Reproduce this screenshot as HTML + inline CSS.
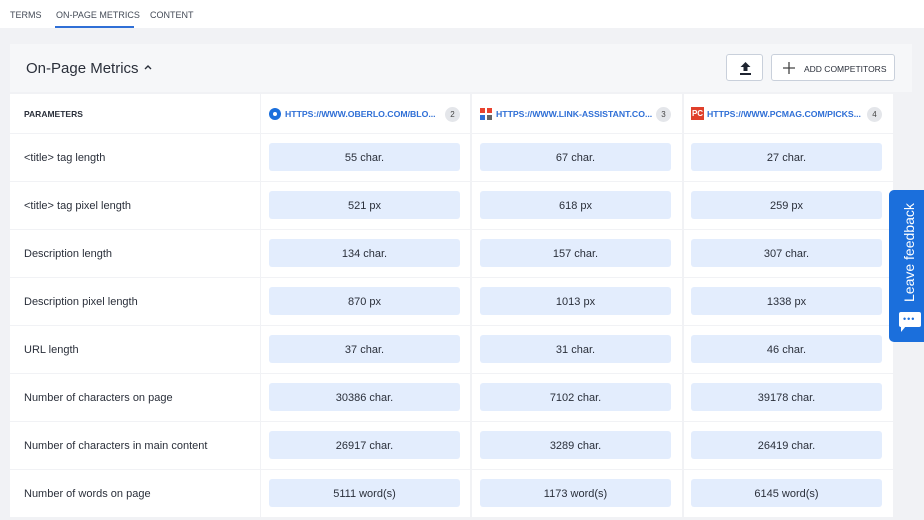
<!DOCTYPE html>
<html><head><style>
*{margin:0;padding:0;box-sizing:border-box}
body{width:924px;height:520px;overflow:hidden;background:#f1f2f5;font-family:"Liberation Sans",sans-serif;color:#2a2f3a;position:relative}
.nav{position:absolute;left:0;top:0;width:924px;height:28px;background:#fff}
.nav span{position:absolute;top:10px;font-size:9px;color:#444b57}
.ul{position:absolute;left:55px;top:26px;width:79px;height:2px;background:#2f6fd6}
.hdr{position:absolute;left:10px;top:44px;width:902px;height:48px;background:#f6f7f9}
.hdr h1{position:absolute;left:16px;top:16px;font-size:15px;font-weight:normal;color:#2a2f3a}
.btn{position:absolute;top:10px;height:27px;border:1px solid #c9d0db;border-radius:3px;background:#fff;font-size:8.5px;color:#2a2f3a}
.cell{position:absolute;background:#fff}
.pill{position:absolute;height:28px;background:#e3edfd;border-radius:3px;font-size:11px;text-align:center;line-height:30px;color:#2a2f3a}
.lab{position:absolute;left:24px;font-size:11px;color:#2a2f3a}
.url{position:absolute;top:109px;font-size:8.7px;font-weight:bold;color:#2f6fd6}
.num{position:absolute;top:107px;width:15px;height:15px;border-radius:50%;background:#e4e6ea;font-size:8px;text-align:center;line-height:15px;color:#444}
.fb{position:absolute;left:889px;top:190px;width:40px;height:152px;background:#1b6fdc;border-radius:5px 0 0 5px}
</style></head><body>
<div class="nav"><span style="left:10px">TERMS</span><span style="left:56px">ON-PAGE METRICS</span><span style="left:150px">CONTENT</span><div class="ul"></div></div>
<div class="hdr"><h1>On-Page Metrics <svg width="10" height="8" viewBox="0 0 10 8" style="vertical-align:2px"><path d="M2 6l3-3 3 3" stroke="#2a2f3a" stroke-width="1.4" fill="none"/></svg></h1>
<div class="btn" style="left:716px;width:37px"><svg width="37" height="27" viewBox="0 0 37 27"><path d="M18.5 7l-5 5h3v4h4v-4h3z M13 18h11v2H13z" fill="#1e2430"/></svg></div>
<div class="btn" style="left:761px;width:124px"><svg width="14" height="14" viewBox="0 0 14 14" style="position:absolute;left:10px;top:6px"><path d="M7 1v12M1 7h12" stroke="#444" stroke-width="1.3"/></svg><span style="position:absolute;left:32px;top:9px">ADD COMPETITORS</span></div>
</div>
<div id="t"></div>
<div class="fb"><div style="position:absolute;left:12px;top:112px;transform:rotate(-90deg);transform-origin:0 0;font-size:14px;color:#fff;white-space:nowrap;width:100px">Leave feedback</div>
<div style="position:absolute;left:10px;top:122px;width:22px;height:15px;background:#fff;border-radius:2px"></div><div style="position:absolute;left:12px;top:136px;width:0;height:0;border-left:5px solid #fff;border-bottom:6px solid transparent"></div>
<div style="position:absolute;left:14px;top:128px;font-size:9px;color:#1b6fdc;letter-spacing:1px;line-height:3px">•••</div></div>
<script>
var rows=[["&lt;title&gt; tag length","55 char.","67 char.","27 char."],["&lt;title&gt; tag pixel length","521 px","618 px","259 px"],["Description length","134 char.","157 char.","307 char."],["Description pixel length","870 px","1013 px","1338 px"],["URL length","37 char.","31 char.","46 char."],["Number of characters on page","30386 char.","7102 char.","39178 char."],["Number of characters in main content","26917 char.","3289 char.","26419 char."],["Number of words on page","5111 word(s)","1173 word(s)","6145 word(s)"]];
var cx=[[10,250],[261,209],[472,210],[684,209]];var h='';
cx.forEach(function(c){h+='<div class="cell" style="left:'+c[0]+'px;top:94px;width:'+c[1]+'px;height:39px"></div>'});
h+='<div style="position:absolute;left:24px;top:109px;font-size:8.5px;font-weight:bold">PARAMETERS</div>';
h+='<div style="position:absolute;left:269px;top:108px;width:12px;height:12px;border-radius:50%;background:#1b6fdc"><div style="position:absolute;left:4px;top:4px;width:4px;height:4px;border-radius:50%;background:#fff"></div></div><div class="url" style="left:285px">HTTPS://WWW.OBERLO.COM/BLO...</div><div class="num" style="left:445px">2</div>';
h+='<div style="position:absolute;left:480px;top:108px;width:5px;height:5px;background:#e8432f"></div><div style="position:absolute;left:487px;top:108px;width:5px;height:5px;background:#e8432f"></div><div style="position:absolute;left:480px;top:115px;width:5px;height:5px;background:#2f6fd6"></div><div style="position:absolute;left:487px;top:115px;width:5px;height:5px;background:#666"></div><div class="url" style="left:496px">HTTPS://WWW.LINK-ASSISTANT.CO...</div><div class="num" style="left:656px">3</div>';
h+='<div style="position:absolute;left:691px;top:107px;width:13px;height:13px;background:#e0402b;color:#fff;font-size:8px;font-weight:bold;line-height:13px;text-align:center">PC</div><div class="url" style="left:707px">HTTPS://WWW.PCMAG.COM/PICKS...</div><div class="num" style="left:867px">4</div>';
rows.forEach(function(r,i){var y=134+i*48;
cx.forEach(function(c){h+='<div class="cell" style="left:'+c[0]+'px;top:'+y+'px;width:'+c[1]+'px;height:47px"></div>'});
h+='<div class="lab" style="top:'+(y+18)+'px">'+r[0]+'</div>';
[269,480,691].forEach(function(x,j){h+='<div class="pill" style="left:'+x+'px;top:'+(y+9)+'px;width:191px">'+r[j+1]+'</div>'});});
document.getElementById('t').innerHTML=h;
</script>
</body></html>
